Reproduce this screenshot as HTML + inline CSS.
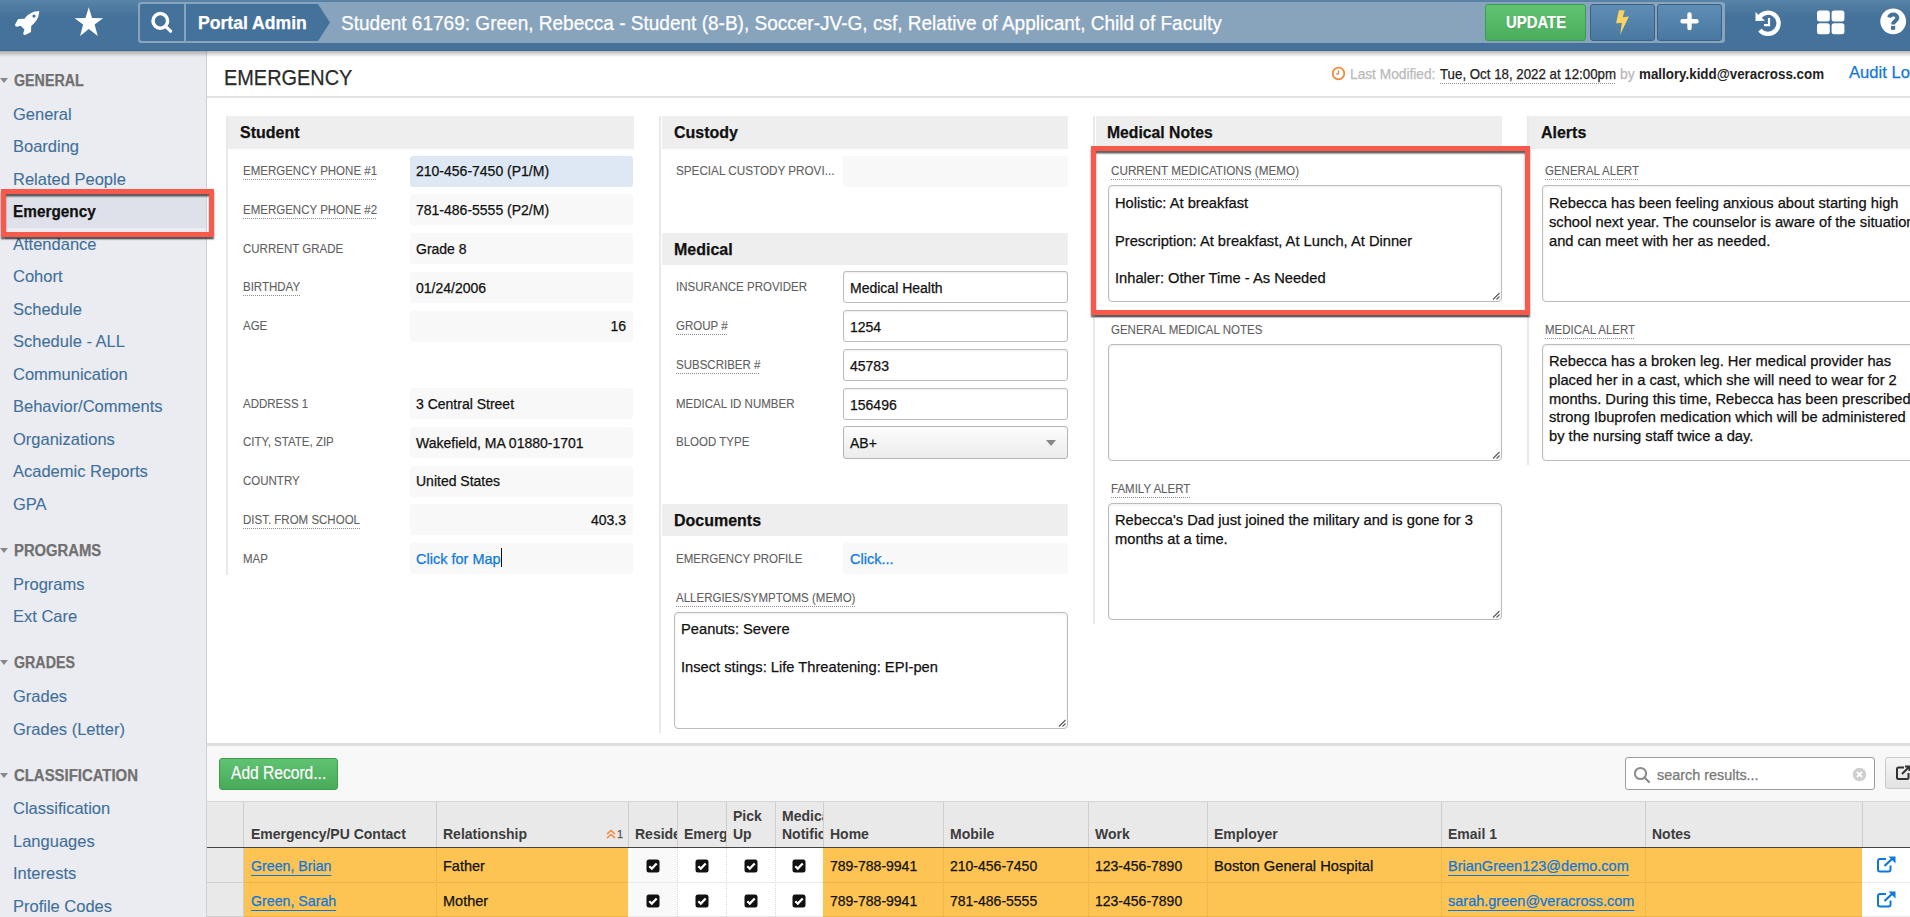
<!DOCTYPE html>
<html><head><meta charset="utf-8">
<style>
*{box-sizing:border-box;margin:0;padding:0}
html,body{width:1910px;height:917px;overflow:hidden;background:#fff;font-family:"Liberation Sans",sans-serif;color:#111}
.a{position:absolute}
.t{position:absolute;white-space:nowrap;line-height:1;-webkit-text-stroke:0.25px currentColor}
.u{border-bottom:1px dotted #9a9a9a;padding-bottom:0}
</style></head><body>
<div class="a" style="left:0;top:0;width:1910px;height:51px;background:linear-gradient(#5a83a8 0px,#4c789f 10px,#45729a 18px,#45719a 49px,#3d6a92 51px)"></div>
<div class="a" style="left:0;top:51px;width:1910px;height:6px;background:linear-gradient(rgba(0,0,0,.28),rgba(0,0,0,0));z-index:5"></div>
<svg class="a" style="left:0;top:0" width="110" height="42" viewBox="0 0 110 42">
<path fill="#fff" d="M39.2 10.9 C33 11 28 14 24.5 18.7 L18.2 19.1 L15 24.6 Q14.8 26.8 16.9 26.8 L20.7 25.8 L24.5 29.4 L23.2 33.2 Q23.4 35.3 25.2 35.1 L31 31.9 L31.2 26 C35.2 22.5 39 18.5 39.2 10.9 Z"/>
<circle cx="34" cy="16.1" r="1.6" fill="#45729a"/>
<path fill="#fff" d="M88.76 7.2 L92.1 17.9 L103.1 18.3 L94.6 24.4 L97.8 35.9 L88.76 29 L80.1 35.9 L83.1 24.4 L74.6 18.3 L85.5 17.9 Z"/>
</svg>
<div class="a" style="left:138px;top:2px;width:1587px;height:41px;background:#88a3bc;border-radius:3px"></div>
<div class="a" style="left:140px;top:4px;width:44px;height:37px;background:#45729a;border-radius:2px 0 0 2px"></div>
<svg class="a" style="left:149px;top:9px" width="26" height="27" viewBox="0 0 26 27">
<circle cx="11.3" cy="11.9" r="7.3" fill="none" stroke="#fff" stroke-width="3.5"/>
<line x1="16.8" y1="17.6" x2="21.6" y2="22.2" stroke="#fff" stroke-width="3.2" stroke-linecap="round"/></svg>
<svg class="a" style="left:186px;top:4px" width="145" height="37" viewBox="0 0 145 37"><path d="M0 0 H132 L144 18.5 L132 37 H0 Z" fill="#45729a"/></svg>
<div class="t" style="left:198px;top:15.04px;font-size:17.6px;color:#fff;font-weight:bold;">Portal Admin</div>
<div class="t" style="left:341px;top:13.07px;font-size:20.5px;color:#fff;transform:scaleX(0.928);transform-origin:0 0;">Student 61769: Green, Rebecca - Student (8-B), Soccer-JV-G, csf, Relative of Applicant, Child of Faculty</div>
<div class="a" style="left:1485px;top:4px;width:101px;height:37px;border-radius:3px;border:1px solid #3c9b4d;background:linear-gradient(#60c474,#4aad5c)"></div>
<div class="t" style="left:1506px;top:13.55px;font-size:17px;color:#fff;font-weight:bold;transform:scaleX(0.875);transform-origin:0 0;text-shadow:0 1px 1px rgba(0,0,0,.25)">UPDATE</div>
<div class="a" style="left:1590px;top:4px;width:65px;height:37px;border-radius:3px;border:1px solid #3b6185;background:linear-gradient(#5e8db6,#4978a1)"></div>
<svg class="a" style="left:1605px;top:5px" width="30" height="32" viewBox="0 0 30 32"><path d="M13.9 5.2 L19.8 5.3 L17.7 12.2 L23.9 11.6 L15.1 29.8 L16.8 17.9 L11.1 18.3 Z" fill="#fad45e"/></svg>
<div class="a" style="left:1657px;top:4px;width:65px;height:37px;border-radius:3px;border:1px solid #3b6185;background:linear-gradient(#5e8db6,#4978a1)"></div>
<svg class="a" style="left:1680px;top:12px" width="19" height="19" viewBox="0 0 19 19"><path d="M9.5 2.5 V16 M2.5 9.3 H16.5" stroke="#fff" stroke-width="4.4" stroke-linecap="round"/></svg>
<svg class="a" style="left:1750px;top:5px" width="40" height="35" viewBox="0 0 40 35">
<path d="M8.4 13.8 A10.6 10.6 0 1 1 9.9 25.1" fill="none" stroke="#fff" stroke-width="4.4"/>
<path d="M5.5 6.9 L5.5 16 L15 15.7 Z" fill="#fff"/>
<path d="M19 13 V20.2 H14" fill="none" stroke="#fff" stroke-width="2.2"/></svg>
<svg class="a" style="left:1816px;top:10px" width="30" height="25" viewBox="0 0 30 25">
<rect x="1" y="0.5" width="12.8" height="11" rx="2.5" fill="#fff"/><rect x="15.6" y="0.5" width="12.8" height="11" rx="2.5" fill="#fff"/>
<rect x="1" y="13.3" width="12.8" height="11" rx="2.5" fill="#fff"/><rect x="15.6" y="13.3" width="12.8" height="11" rx="2.5" fill="#fff"/></svg>
<svg class="a" style="left:1875px;top:5px" width="35" height="35" viewBox="0 0 35 35">
<circle cx="18.2" cy="16.3" r="12.9" fill="#fff"/>
<path d="M14.2 12.6 C14.8 10.2 16.4 9.6 18.3 9.6 C20.6 9.6 22.3 10.9 22.3 13 C22.3 15.8 18.1 16.1 18.1 19.4" fill="none" stroke="#45729a" stroke-width="4"/>
<rect x="16" y="20.9" width="4.2" height="3.9" fill="#45729a"/></svg>
<div class="a" style="left:0px;top:51px;width:207px;height:866px;background:#ebecf1;border-right:1px solid #d0d0d2"></div>
<div class="t" style="left:14px;top:72.74px;font-size:15.6px;color:#707070;font-weight:bold;transform:scaleX(0.915);transform-origin:0 0;">GENERAL</div>
<div class="a" style="left:0;top:78px;width:0;height:0;border-left:4px solid transparent;border-right:4px solid transparent;border-top:5px solid #888"></div>
<div class="t" style="left:13px;top:105.97px;font-size:16.5px;color:#41709a;-webkit-text-stroke:0.1px currentColor">General</div>
<div class="t" style="left:13px;top:138.47px;font-size:16.5px;color:#41709a;-webkit-text-stroke:0.1px currentColor">Boarding</div>
<div class="t" style="left:13px;top:170.97px;font-size:16.5px;color:#41709a;-webkit-text-stroke:0.1px currentColor">Related People</div>
<div class="a" style="left:0px;top:195px;width:206px;height:33px;background:#dfe1ea"></div>
<div class="t" style="left:13px;top:203.47px;font-size:16.5px;color:#111;font-weight:bold;transform:scaleX(0.93);transform-origin:0 0;">Emergency</div>
<div class="t" style="left:13px;top:235.97px;font-size:16.5px;color:#41709a;-webkit-text-stroke:0.1px currentColor">Attendance</div>
<div class="t" style="left:13px;top:268.48px;font-size:16.5px;color:#41709a;-webkit-text-stroke:0.1px currentColor">Cohort</div>
<div class="t" style="left:13px;top:300.98px;font-size:16.5px;color:#41709a;-webkit-text-stroke:0.1px currentColor">Schedule</div>
<div class="t" style="left:13px;top:333.48px;font-size:16.5px;color:#41709a;-webkit-text-stroke:0.1px currentColor">Schedule - ALL</div>
<div class="t" style="left:13px;top:365.98px;font-size:16.5px;color:#41709a;-webkit-text-stroke:0.1px currentColor">Communication</div>
<div class="t" style="left:13px;top:398.48px;font-size:16.5px;color:#41709a;-webkit-text-stroke:0.1px currentColor">Behavior/Comments</div>
<div class="t" style="left:13px;top:430.98px;font-size:16.5px;color:#41709a;-webkit-text-stroke:0.1px currentColor">Organizations</div>
<div class="t" style="left:13px;top:463.48px;font-size:16.5px;color:#41709a;-webkit-text-stroke:0.1px currentColor">Academic Reports</div>
<div class="t" style="left:13px;top:495.98px;font-size:16.5px;color:#41709a;-webkit-text-stroke:0.1px currentColor">GPA</div>
<div class="t" style="left:14px;top:542.74px;font-size:15.6px;color:#707070;font-weight:bold;transform:scaleX(0.95);transform-origin:0 0;">PROGRAMS</div>
<div class="a" style="left:0;top:548px;width:0;height:0;border-left:4px solid transparent;border-right:4px solid transparent;border-top:5px solid #888"></div>
<div class="t" style="left:13px;top:575.98px;font-size:16.5px;color:#41709a;-webkit-text-stroke:0.1px currentColor">Programs</div>
<div class="t" style="left:13px;top:608.48px;font-size:16.5px;color:#41709a;-webkit-text-stroke:0.1px currentColor">Ext Care</div>
<div class="t" style="left:14px;top:654.74px;font-size:15.6px;color:#707070;font-weight:bold;transform:scaleX(0.913);transform-origin:0 0;">GRADES</div>
<div class="a" style="left:0;top:660px;width:0;height:0;border-left:4px solid transparent;border-right:4px solid transparent;border-top:5px solid #888"></div>
<div class="t" style="left:13px;top:687.98px;font-size:16.5px;color:#41709a;-webkit-text-stroke:0.1px currentColor">Grades</div>
<div class="t" style="left:13px;top:720.98px;font-size:16.5px;color:#41709a;-webkit-text-stroke:0.1px currentColor">Grades (Letter)</div>
<div class="t" style="left:14px;top:767.74px;font-size:15.6px;color:#707070;font-weight:bold;transform:scaleX(0.956);transform-origin:0 0;">CLASSIFICATION</div>
<div class="a" style="left:0;top:773px;width:0;height:0;border-left:4px solid transparent;border-right:4px solid transparent;border-top:5px solid #888"></div>
<div class="t" style="left:13px;top:800.48px;font-size:16.5px;color:#41709a;-webkit-text-stroke:0.1px currentColor">Classification</div>
<div class="t" style="left:13px;top:832.98px;font-size:16.5px;color:#41709a;-webkit-text-stroke:0.1px currentColor">Languages</div>
<div class="t" style="left:13px;top:865.48px;font-size:16.5px;color:#41709a;-webkit-text-stroke:0.1px currentColor">Interests</div>
<div class="t" style="left:13px;top:897.98px;font-size:16.5px;color:#41709a;-webkit-text-stroke:0.1px currentColor">Profile Codes</div>
<div class="a" style="left:1px;top:189px;width:213px;height:48px;border:5px solid #f9594a;box-shadow:0 2.5px 1.5px rgba(30,30,30,.72),inset 0 2.5px 1.5px rgba(30,30,30,.72);z-index:6"></div>
<div class="t" style="left:223.5px;top:66.88px;font-size:22.5px;color:#2a2a2a;transform:scaleX(0.885);transform-origin:0 0;">EMERGENCY</div>
<div class="a" style="left:206px;top:96px;width:1704px;height:2px;background:#e2e2e2"></div>
<svg class="a" style="left:1331px;top:66px" width="15" height="15" viewBox="0 0 15 15"><circle cx="7.5" cy="7.5" r="5.8" fill="none" stroke="#f5883a" stroke-width="1.8"/><path d="M7.5 4.2 V7.8 H5" fill="none" stroke="#f5883a" stroke-width="1.3"/></svg>
<div class="t" style="left:1350px;top:67.10px;font-size:14px;color:#b9b9b9;transform:scaleX(0.98);transform-origin:0 0;">Last Modified:</div>
<div class="t" style="left:1440px;top:67.10px;font-size:14px;color:#222;transform:scaleX(0.949);transform-origin:0 0;">Tue, Oct 18, 2022 at 12:00pm</div>
<div class="a" style="left:1440px;top:83px;width:176px;height:1px;background:repeating-linear-gradient(90deg,#8c8c8c 0 1px,transparent 1px 2px)"></div>
<div class="t" style="left:1620px;top:67.10px;font-size:14px;color:#b9b9b9;">by</div>
<div class="t" style="left:1639px;top:67.10px;font-size:14px;color:#222;font-weight:bold;transform:scaleX(0.954);transform-origin:0 0;-webkit-text-stroke:0">mallory.kidd@veracross.com</div>
<div class="t" style="left:1849px;top:64.89px;font-size:16.6px;color:#0f78dc;">Audit Log</div>
<div class="a" style="left:226px;top:116px;width:2px;height:459px;background:#e9e9e9"></div>
<div class="a" style="left:228px;top:116px;width:406px;height:33px;background:#eeeeee;border-radius:2px 0 0 0"></div>
<div class="t" style="left:240px;top:123.55px;font-size:17px;color:#111;font-weight:bold;transform:scaleX(0.94);transform-origin:0 0;">Student</div>
<div class="t" style="left:243px;top:164px;font-size:13px;color:#606060;transform:scaleX(0.885);transform-origin:0 0;-webkit-text-stroke:0.1px currentColor;">EMERGENCY PHONE #1</div>
<div class="a" style="left:243px;top:179px;width:134px;height:1px;background:repeating-linear-gradient(90deg,#8c8c8c 0 1px,transparent 1px 2px)"></div>
<div class="a" style="left:410px;top:156px;width:223px;height:31px;background:#dde8f4;border-radius:3px"></div>
<div class="t" style="left:416px;top:164.10px;font-size:14px;color:#111;">210-456-7450 (P1/M)</div>
<div class="t" style="left:243px;top:203px;font-size:13px;color:#606060;transform:scaleX(0.885);transform-origin:0 0;-webkit-text-stroke:0.1px currentColor;">EMERGENCY PHONE #2</div>
<div class="a" style="left:243px;top:218px;width:134px;height:1px;background:repeating-linear-gradient(90deg,#8c8c8c 0 1px,transparent 1px 2px)"></div>
<div class="a" style="left:410px;top:194px;width:223px;height:31px;background:#f8f8f8;border-radius:3px"></div>
<div class="t" style="left:416px;top:203.10px;font-size:14px;color:#111;">781-486-5555 (P2/M)</div>
<div class="t" style="left:243px;top:242px;font-size:13px;color:#606060;transform:scaleX(0.885);transform-origin:0 0;-webkit-text-stroke:0.1px currentColor;">CURRENT GRADE</div>
<div class="a" style="left:410px;top:233px;width:223px;height:31px;background:#f8f8f8;border-radius:3px"></div>
<div class="t" style="left:416px;top:242.10px;font-size:14px;color:#111;">Grade 8</div>
<div class="t" style="left:243px;top:280px;font-size:13px;color:#606060;transform:scaleX(0.885);transform-origin:0 0;-webkit-text-stroke:0.1px currentColor;">BIRTHDAY</div>
<div class="a" style="left:243px;top:295px;width:57px;height:1px;background:repeating-linear-gradient(90deg,#8c8c8c 0 1px,transparent 1px 2px)"></div>
<div class="a" style="left:410px;top:272px;width:223px;height:31px;background:#f8f8f8;border-radius:3px"></div>
<div class="t" style="left:416px;top:281.10px;font-size:14px;color:#111;">01/24/2006</div>
<div class="t" style="left:243px;top:319px;font-size:13px;color:#606060;transform:scaleX(0.885);transform-origin:0 0;-webkit-text-stroke:0.1px currentColor;">AGE</div>
<div class="a" style="left:410px;top:311px;width:223px;height:31px;background:#f8f8f8;border-radius:3px"></div>
<div class="t" style="right:1284px;top:319.10px;font-size:14px;color:#111">16</div>
<div class="t" style="left:243px;top:397px;font-size:13px;color:#606060;transform:scaleX(0.885);transform-origin:0 0;-webkit-text-stroke:0.1px currentColor;">ADDRESS 1</div>
<div class="a" style="left:410px;top:388px;width:223px;height:31px;background:#f8f8f8;border-radius:3px"></div>
<div class="t" style="left:416px;top:397.10px;font-size:14px;color:#111;">3 Central Street</div>
<div class="t" style="left:243px;top:435px;font-size:13px;color:#606060;transform:scaleX(0.885);transform-origin:0 0;-webkit-text-stroke:0.1px currentColor;">CITY, STATE, ZIP</div>
<div class="a" style="left:410px;top:427px;width:223px;height:31px;background:#f8f8f8;border-radius:3px"></div>
<div class="t" style="left:416px;top:436.10px;font-size:14px;color:#111;">Wakefield, MA 01880-1701</div>
<div class="t" style="left:243px;top:474px;font-size:13px;color:#606060;transform:scaleX(0.885);transform-origin:0 0;-webkit-text-stroke:0.1px currentColor;">COUNTRY</div>
<div class="a" style="left:410px;top:466px;width:223px;height:31px;background:#f8f8f8;border-radius:3px"></div>
<div class="t" style="left:416px;top:474.10px;font-size:14px;color:#111;">United States</div>
<div class="t" style="left:243px;top:513px;font-size:13px;color:#606060;transform:scaleX(0.885);transform-origin:0 0;-webkit-text-stroke:0.1px currentColor;">DIST. FROM SCHOOL</div>
<div class="a" style="left:243px;top:528px;width:117px;height:1px;background:repeating-linear-gradient(90deg,#8c8c8c 0 1px,transparent 1px 2px)"></div>
<div class="a" style="left:410px;top:504px;width:223px;height:31px;background:#f8f8f8;border-radius:3px"></div>
<div class="t" style="right:1284px;top:513.10px;font-size:14px;color:#111">403.3</div>
<div class="t" style="left:243px;top:552px;font-size:13px;color:#606060;transform:scaleX(0.885);transform-origin:0 0;-webkit-text-stroke:0.1px currentColor;">MAP</div>
<div class="a" style="left:410px;top:543px;width:223px;height:31px;background:#f8f8f8;border-radius:3px"></div>
<div class="t" style="left:416px;top:551.67px;font-size:14.5px;color:#0f78dc;">Click for Map</div>
<div class="a" style="left:501px;top:548px;width:1px;height:19px;background:#111"></div>
<div class="a" style="left:659px;top:116px;width:2px;height:617px;background:#e9e9e9"></div>
<div class="a" style="left:662px;top:116px;width:406px;height:33px;background:#eeeeee;border-radius:2px 0 0 0"></div>
<div class="t" style="left:674px;top:123.55px;font-size:17px;color:#111;font-weight:bold;transform:scaleX(0.94);transform-origin:0 0;">Custody</div>
<div class="t" style="left:676px;top:164px;font-size:13px;color:#606060;transform:scaleX(0.9);transform-origin:0 0;-webkit-text-stroke:0.1px currentColor;">SPECIAL CUSTODY PROVI...</div>
<div class="a" style="left:843px;top:156px;width:225px;height:31px;background:#f8f8f8;border-radius:3px"></div>
<div class="a" style="left:662px;top:233px;width:406px;height:32px;background:#eeeeee;border-radius:2px 0 0 0"></div>
<div class="t" style="left:674px;top:240.55px;font-size:17px;color:#111;font-weight:bold;transform:scaleX(0.94);transform-origin:0 0;">Medical</div>
<div class="t" style="left:676px;top:280px;font-size:13px;color:#606060;transform:scaleX(0.885);transform-origin:0 0;-webkit-text-stroke:0.1px currentColor;">INSURANCE PROVIDER</div>
<div class="a" style="left:843px;top:271px;width:225px;height:32px;background:#fff;border:1px solid #bcbcbc;border-radius:3px;box-shadow:inset 0 1px 2px rgba(0,0,0,.07)"></div>
<div class="t" style="left:850px;top:281.10px;font-size:14px;color:#111;">Medical Health</div>
<div class="t" style="left:676px;top:319px;font-size:13px;color:#606060;transform:scaleX(0.885);transform-origin:0 0;-webkit-text-stroke:0.1px currentColor;">GROUP #</div>
<div class="a" style="left:676px;top:334px;width:52px;height:1px;background:repeating-linear-gradient(90deg,#8c8c8c 0 1px,transparent 1px 2px)"></div>
<div class="a" style="left:843px;top:310px;width:225px;height:32px;background:#fff;border:1px solid #bcbcbc;border-radius:3px;box-shadow:inset 0 1px 2px rgba(0,0,0,.07)"></div>
<div class="t" style="left:850px;top:320.10px;font-size:14px;color:#111;">1254</div>
<div class="t" style="left:676px;top:358px;font-size:13px;color:#606060;transform:scaleX(0.885);transform-origin:0 0;-webkit-text-stroke:0.1px currentColor;">SUBSCRIBER #</div>
<div class="a" style="left:676px;top:373px;width:84px;height:1px;background:repeating-linear-gradient(90deg,#8c8c8c 0 1px,transparent 1px 2px)"></div>
<div class="a" style="left:843px;top:349px;width:225px;height:32px;background:#fff;border:1px solid #bcbcbc;border-radius:3px;box-shadow:inset 0 1px 2px rgba(0,0,0,.07)"></div>
<div class="t" style="left:850px;top:359.10px;font-size:14px;color:#111;">45783</div>
<div class="t" style="left:676px;top:397px;font-size:13px;color:#606060;transform:scaleX(0.885);transform-origin:0 0;-webkit-text-stroke:0.1px currentColor;">MEDICAL ID NUMBER</div>
<div class="a" style="left:843px;top:388px;width:225px;height:32px;background:#fff;border:1px solid #bcbcbc;border-radius:3px;box-shadow:inset 0 1px 2px rgba(0,0,0,.07)"></div>
<div class="t" style="left:850px;top:398.10px;font-size:14px;color:#111;">156496</div>
<div class="t" style="left:676px;top:435px;font-size:13px;color:#606060;transform:scaleX(0.885);transform-origin:0 0;-webkit-text-stroke:0.1px currentColor;">BLOOD TYPE</div>
<div class="a" style="left:843px;top:426px;width:225px;height:33px;background:linear-gradient(#fcfcfc,#ececec);border:1px solid #b4b4b4;border-radius:3px"></div>
<div class="t" style="left:850px;top:436.10px;font-size:14px;color:#111;">AB+</div>
<div class="a" style="left:1046px;top:440px;width:0;height:0;border-left:5px solid transparent;border-right:5px solid transparent;border-top:6px solid #888"></div>
<div class="a" style="left:662px;top:504px;width:406px;height:32px;background:#eeeeee;border-radius:2px 0 0 0"></div>
<div class="t" style="left:674px;top:511.55px;font-size:17px;color:#111;font-weight:bold;transform:scaleX(0.94);transform-origin:0 0;">Documents</div>
<div class="t" style="left:676px;top:552px;font-size:13px;color:#606060;transform:scaleX(0.885);transform-origin:0 0;-webkit-text-stroke:0.1px currentColor;">EMERGENCY PROFILE</div>
<div class="a" style="left:843px;top:543px;width:225px;height:31px;background:#f8f8f8;border-radius:3px"></div>
<div class="t" style="left:850px;top:551.67px;font-size:14.5px;color:#0f78dc;">Click...</div>
<div class="t" style="left:676px;top:591px;font-size:13px;color:#606060;transform:scaleX(0.885);transform-origin:0 0;-webkit-text-stroke:0.1px currentColor;">ALLERGIES/SYMPTOMS (MEMO)</div>
<div class="a" style="left:676px;top:606px;width:179px;height:1px;background:repeating-linear-gradient(90deg,#8c8c8c 0 1px,transparent 1px 2px)"></div>
<div class="a" style="left:674px;top:612px;width:394px;height:117px;background:#fff;border:1px solid #bcbcbc;border-radius:4px;box-shadow:inset 0 1px 3px rgba(0,0,0,.08)"></div>
<div class="t" style="left:681px;top:621.50px;font-size:14.7px;color:#111;">Peanuts: Severe</div>
<div class="t" style="left:681px;top:659.50px;font-size:14.7px;color:#111;">Insect stings: Life Threatening: EPI-pen</div>
<svg class="a" style="left:1058px;top:719px" width="8" height="8" viewBox="0 0 8 8"><path d="M7.5 1 L1 7.5 M7.5 4.5 L4.5 7.5" stroke="#5a5a5a" stroke-width="1.1"/></svg>
<div class="a" style="left:1093px;top:116px;width:2px;height:508px;background:#e9e9e9"></div>
<div class="a" style="left:1096px;top:116px;width:406px;height:33px;background:#eeeeee;border-radius:2px 0 0 0"></div>
<div class="t" style="left:1107px;top:123.55px;font-size:17px;color:#111;font-weight:bold;transform:scaleX(0.925);transform-origin:0 0;">Medical Notes</div>
<div class="t" style="left:1111px;top:164px;font-size:13px;color:#606060;transform:scaleX(0.9);transform-origin:0 0;-webkit-text-stroke:0.1px currentColor;">CURRENT MEDICATIONS (MEMO)</div>
<div class="a" style="left:1111px;top:179px;width:188px;height:1px;background:repeating-linear-gradient(90deg,#8c8c8c 0 1px,transparent 1px 2px)"></div>
<div class="a" style="left:1108px;top:185px;width:394px;height:117px;background:#fff;border:1px solid #bcbcbc;border-radius:4px;box-shadow:inset 0 1px 3px rgba(0,0,0,.08)"></div>
<div class="t" style="left:1115px;top:195.50px;font-size:14.7px;color:#111;">Holistic: At breakfast</div>
<div class="t" style="left:1115px;top:233.50px;font-size:14.7px;color:#111;">Prescription: At breakfast, At Lunch, At Dinner</div>
<div class="t" style="left:1115px;top:270.50px;font-size:14.7px;color:#111;">Inhaler: Other Time - As Needed</div>
<svg class="a" style="left:1492px;top:292px" width="8" height="8" viewBox="0 0 8 8"><path d="M7.5 1 L1 7.5 M7.5 4.5 L4.5 7.5" stroke="#5a5a5a" stroke-width="1.1"/></svg>
<div class="t" style="left:1111px;top:323px;font-size:13px;color:#606060;transform:scaleX(0.885);transform-origin:0 0;-webkit-text-stroke:0.1px currentColor;">GENERAL MEDICAL NOTES</div>
<div class="a" style="left:1108px;top:344px;width:394px;height:117px;background:#fff;border:1px solid #bcbcbc;border-radius:4px;box-shadow:inset 0 1px 3px rgba(0,0,0,.08)"></div>
<svg class="a" style="left:1492px;top:451px" width="8" height="8" viewBox="0 0 8 8"><path d="M7.5 1 L1 7.5 M7.5 4.5 L4.5 7.5" stroke="#5a5a5a" stroke-width="1.1"/></svg>
<div class="t" style="left:1111px;top:482px;font-size:13px;color:#606060;transform:scaleX(0.885);transform-origin:0 0;-webkit-text-stroke:0.1px currentColor;">FAMILY ALERT</div>
<div class="a" style="left:1111px;top:497px;width:79px;height:1px;background:repeating-linear-gradient(90deg,#8c8c8c 0 1px,transparent 1px 2px)"></div>
<div class="a" style="left:1108px;top:503px;width:394px;height:117px;background:#fff;border:1px solid #bcbcbc;border-radius:4px;box-shadow:inset 0 1px 3px rgba(0,0,0,.08)"></div>
<div class="t" style="left:1115px;top:512.50px;font-size:14.7px;color:#111;">Rebecca&#x27;s Dad just joined the military and is gone for 3</div>
<div class="t" style="left:1115px;top:531.50px;font-size:14.7px;color:#111;">months at a time.</div>
<svg class="a" style="left:1492px;top:610px" width="8" height="8" viewBox="0 0 8 8"><path d="M7.5 1 L1 7.5 M7.5 4.5 L4.5 7.5" stroke="#5a5a5a" stroke-width="1.1"/></svg>
<div class="a" style="left:1091px;top:146px;width:439px;height:169px;border:5px solid #f9594a;box-shadow:0 2.5px 1.5px rgba(30,30,30,.72),inset 0 2.5px 1.5px rgba(30,30,30,.72);z-index:6"></div>
<div class="a" style="left:1527px;top:116px;width:2px;height:349px;background:#e9e9e9"></div>
<div class="a" style="left:1529px;top:116px;width:399px;height:33px;background:#eeeeee;border-radius:2px 0 0 0"></div>
<div class="t" style="left:1541px;top:123.55px;font-size:17px;color:#111;font-weight:bold;transform:scaleX(0.94);transform-origin:0 0;">Alerts</div>
<div class="t" style="left:1545px;top:164px;font-size:13px;color:#606060;transform:scaleX(0.885);transform-origin:0 0;-webkit-text-stroke:0.1px currentColor;">GENERAL ALERT</div>
<div class="a" style="left:1545px;top:179px;width:94px;height:1px;background:repeating-linear-gradient(90deg,#8c8c8c 0 1px,transparent 1px 2px)"></div>
<div class="a" style="left:1542px;top:185px;width:400px;height:117px;background:#fff;border:1px solid #bcbcbc;border-radius:4px;box-shadow:inset 0 1px 3px rgba(0,0,0,.08)"></div>
<div class="t" style="left:1549px;top:195.50px;font-size:14.7px;color:#111;">Rebecca has been feeling anxious about starting high</div>
<div class="t" style="left:1549px;top:214.50px;font-size:14.7px;color:#111;">school next year. The counselor is aware of the situation</div>
<div class="t" style="left:1549px;top:233.50px;font-size:14.7px;color:#111;">and can meet with her as needed.</div>
<svg class="a" style="left:1932px;top:292px" width="8" height="8" viewBox="0 0 8 8"><path d="M7.5 1 L1 7.5 M7.5 4.5 L4.5 7.5" stroke="#5a5a5a" stroke-width="1.1"/></svg>
<div class="t" style="left:1545px;top:323px;font-size:13px;color:#606060;transform:scaleX(0.885);transform-origin:0 0;-webkit-text-stroke:0.1px currentColor;">MEDICAL ALERT</div>
<div class="a" style="left:1545px;top:338px;width:90px;height:1px;background:repeating-linear-gradient(90deg,#8c8c8c 0 1px,transparent 1px 2px)"></div>
<div class="a" style="left:1542px;top:344px;width:400px;height:117px;background:#fff;border:1px solid #bcbcbc;border-radius:4px;box-shadow:inset 0 1px 3px rgba(0,0,0,.08)"></div>
<div class="t" style="left:1549px;top:353.50px;font-size:14.7px;color:#111;">Rebecca has a broken leg. Her medical provider has</div>
<div class="t" style="left:1549px;top:372.50px;font-size:14.7px;color:#111;">placed her in a cast, which she will need to wear for 2</div>
<div class="t" style="left:1549px;top:391.50px;font-size:14.7px;color:#111;">months. During this time, Rebecca has been prescribed</div>
<div class="t" style="left:1549px;top:409.50px;font-size:14.7px;color:#111;">strong Ibuprofen medication which will be administered</div>
<div class="t" style="left:1549px;top:428.50px;font-size:14.7px;color:#111;">by the nursing staff twice a day.</div>
<svg class="a" style="left:1932px;top:451px" width="8" height="8" viewBox="0 0 8 8"><path d="M7.5 1 L1 7.5 M7.5 4.5 L4.5 7.5" stroke="#5a5a5a" stroke-width="1.1"/></svg>
<div class="a" style="left:206px;top:743px;width:1704px;height:3px;background:#dedede"></div>
<div class="a" style="left:206px;top:746px;width:1704px;height:56px;background:#f8f8f8;border-bottom:1px solid #d6d6d6"></div>
<div class="a" style="left:219px;top:758px;width:119px;height:32px;background:linear-gradient(#5fc373,#47ab59);border:1px solid #3d9c4e;border-radius:3px"></div>
<div class="t" style="left:230.5px;top:765.04px;font-size:17.6px;color:#fff;transform:scaleX(0.885);transform-origin:0 0;text-shadow:0 1px 1px rgba(0,0,0,.2)">Add Record...</div>
<div class="a" style="left:1625px;top:757px;width:250px;height:33px;background:#fff;border:1px solid #9c9c9c;border-radius:3px"></div>
<svg class="a" style="left:1633px;top:766px" width="19" height="19" viewBox="0 0 19 19"><circle cx="7.5" cy="7.5" r="5.6" fill="none" stroke="#8c8c8c" stroke-width="2"/><line x1="11.5" y1="11.5" x2="16" y2="16" stroke="#8c8c8c" stroke-width="2.2" stroke-linecap="round"/></svg>
<div class="t" style="left:1657px;top:767.76px;font-size:14.4px;color:#777;">search results...</div>
<svg class="a" style="left:1852px;top:767px" width="15" height="15" viewBox="0 0 15 15"><circle cx="7.5" cy="7.5" r="6.8" fill="#cfcfcf"/><path d="M5 5 L10 10 M10 5 L5 10" stroke="#fff" stroke-width="1.8"/></svg>
<div class="a" style="left:1885px;top:757px;width:40px;height:32px;background:linear-gradient(#f6f6f6,#e2e2e2);border:1px solid #c8c8c8;border-radius:3px"></div>
<svg class="a" style="left:1895px;top:765px" width="16" height="16" viewBox="0 0 16 16"><path d="M9 2.5 H3.5 Q2 2.5 2 4 V12.5 Q2 14 3.5 14 H12 Q13.5 14 13.5 12.5 V8" fill="none" stroke="#333" stroke-width="2"/><path d="M7 9 L14 2 M10 1.5 H14.5 V6" fill="none" stroke="#333" stroke-width="2"/></svg>
<div class="a" style="left:206px;top:802px;width:1704px;height:46px;background:#e9e9e9"></div>
<div class="a" style="left:206px;top:847px;width:1704px;height:1px;background:#444"></div>
<div class="a" style="left:243px;top:802px;width:1px;height:45px;background:#cdcdcd"></div>
<div class="a" style="left:436px;top:802px;width:1px;height:45px;background:#cdcdcd"></div>
<div class="a" style="left:628px;top:802px;width:1px;height:45px;background:#cdcdcd"></div>
<div class="a" style="left:677px;top:802px;width:1px;height:45px;background:#cdcdcd"></div>
<div class="a" style="left:726px;top:802px;width:1px;height:45px;background:#cdcdcd"></div>
<div class="a" style="left:775px;top:802px;width:1px;height:45px;background:#cdcdcd"></div>
<div class="a" style="left:823px;top:802px;width:1px;height:45px;background:#cdcdcd"></div>
<div class="a" style="left:943px;top:802px;width:1px;height:45px;background:#cdcdcd"></div>
<div class="a" style="left:1088px;top:802px;width:1px;height:45px;background:#cdcdcd"></div>
<div class="a" style="left:1207px;top:802px;width:1px;height:45px;background:#cdcdcd"></div>
<div class="a" style="left:1441px;top:802px;width:1px;height:45px;background:#cdcdcd"></div>
<div class="a" style="left:1645px;top:802px;width:1px;height:45px;background:#cdcdcd"></div>
<div class="a" style="left:1862px;top:802px;width:1px;height:45px;background:#cdcdcd"></div>
<div class="t" style="left:251px;top:827.10px;font-size:14px;color:#3c3c3c;font-weight:bold;-webkit-text-stroke:0">Emergency/PU Contact</div>
<div class="t" style="left:443px;top:827.10px;font-size:14px;color:#3c3c3c;font-weight:bold;-webkit-text-stroke:0">Relationship</div>
<svg class="a" style="left:606px;top:829px" width="10" height="10" viewBox="0 0 10 10"><path d="M1 5 L5 1.5 L9 5 M1 9 L5 5.5 L9 9" fill="none" stroke="#f5883a" stroke-width="1.6"/></svg>
<div class="t" style="left:617px;top:828.65px;font-size:11px;color:#555;">1</div>
<div class="a" style="left:635px;top:805px;width:42px;height:40px;overflow:hidden"><div class="t" style="left:0;top:22.10px;font-size:14px;font-weight:bold;color:#3c3c3c;-webkit-text-stroke:0">Residence</div></div>
<div class="a" style="left:684px;top:805px;width:42px;height:40px;overflow:hidden"><div class="t" style="left:0;top:22.10px;font-size:14px;font-weight:bold;color:#3c3c3c;-webkit-text-stroke:0">Emergency</div></div>
<div class="t" style="left:733px;top:808.60px;font-size:14px;color:#3c3c3c;font-weight:bold;-webkit-text-stroke:0">Pick</div>
<div class="t" style="left:733px;top:827.10px;font-size:14px;color:#3c3c3c;font-weight:bold;-webkit-text-stroke:0">Up</div>
<div class="a" style="left:782px;top:805px;width:41px;height:40px;overflow:hidden"><div class="t" style="left:0;top:3.60px;font-size:14px;font-weight:bold;color:#3c3c3c;-webkit-text-stroke:0">Medical</div></div>
<div class="a" style="left:782px;top:805px;width:41px;height:40px;overflow:hidden"><div class="t" style="left:0;top:22.10px;font-size:14px;font-weight:bold;color:#3c3c3c;-webkit-text-stroke:0">Notification</div></div>
<div class="t" style="left:830px;top:827.10px;font-size:14px;color:#3c3c3c;font-weight:bold;-webkit-text-stroke:0">Home</div>
<div class="t" style="left:950px;top:827.10px;font-size:14px;color:#3c3c3c;font-weight:bold;-webkit-text-stroke:0">Mobile</div>
<div class="t" style="left:1095px;top:827.10px;font-size:14px;color:#3c3c3c;font-weight:bold;-webkit-text-stroke:0">Work</div>
<div class="t" style="left:1214px;top:827.10px;font-size:14px;color:#3c3c3c;font-weight:bold;-webkit-text-stroke:0">Employer</div>
<div class="t" style="left:1448px;top:827.10px;font-size:14px;color:#3c3c3c;font-weight:bold;-webkit-text-stroke:0">Email 1</div>
<div class="t" style="left:1652px;top:827.10px;font-size:14px;color:#3c3c3c;font-weight:bold;-webkit-text-stroke:0">Notes</div>
<div class="a" style="left:206px;top:848px;width:38px;height:35px;background:#e9e9e9;border-bottom:1px solid #d0d0d0"></div>
<div class="a" style="left:244px;top:848px;width:384px;height:35px;background:#fec453;border-bottom:1px solid #eeb447"></div>
<div class="a" style="left:628px;top:848px;width:49px;height:35px;background:#f9f9f9;border-bottom:1px solid #eaeaea"></div>
<div class="a" style="left:677px;top:848px;width:146px;height:35px;background:#fff;border-bottom:1px solid #eaeaea"></div>
<div class="a" style="left:823px;top:848px;width:1039px;height:35px;background:#fec453;border-bottom:1px solid #eeb447"></div>
<div class="a" style="left:1862px;top:848px;width:48px;height:35px;background:#fff;border-bottom:1px solid #eaeaea"></div>
<div class="a" style="left:206px;top:883px;width:38px;height:34px;background:#e9e9e9;border-bottom:1px solid #d0d0d0"></div>
<div class="a" style="left:244px;top:883px;width:384px;height:34px;background:#fec453;border-bottom:1px solid #eeb447"></div>
<div class="a" style="left:628px;top:883px;width:49px;height:34px;background:#f9f9f9;border-bottom:1px solid #eaeaea"></div>
<div class="a" style="left:677px;top:883px;width:146px;height:34px;background:#fff;border-bottom:1px solid #eaeaea"></div>
<div class="a" style="left:823px;top:883px;width:1039px;height:34px;background:#fec453;border-bottom:1px solid #eeb447"></div>
<div class="a" style="left:1862px;top:883px;width:48px;height:34px;background:#fff;border-bottom:1px solid #eaeaea"></div>
<div class="a" style="left:436px;top:848px;width:0;height:69px;border-left:1px dotted #e3ad45"></div>
<div class="a" style="left:677px;top:848px;width:0;height:69px;border-left:1px dotted #d8d8d8"></div>
<div class="a" style="left:726px;top:848px;width:0;height:69px;border-left:1px dotted #d8d8d8"></div>
<div class="a" style="left:775px;top:848px;width:0;height:69px;border-left:1px dotted #d8d8d8"></div>
<div class="a" style="left:943px;top:848px;width:0;height:69px;border-left:1px dotted #e3ad45"></div>
<div class="a" style="left:1088px;top:848px;width:0;height:69px;border-left:1px dotted #e3ad45"></div>
<div class="a" style="left:1207px;top:848px;width:0;height:69px;border-left:1px dotted #e3ad45"></div>
<div class="a" style="left:1441px;top:848px;width:0;height:69px;border-left:1px dotted #e3ad45"></div>
<div class="a" style="left:1645px;top:848px;width:0;height:69px;border-left:1px dotted #e3ad45"></div>
<div class="t" style="left:251px;top:858.93px;font-size:14.2px;color:#0f78dc;text-decoration:underline;text-underline-offset:4px">Green, Brian</div>
<div class="t" style="left:443px;top:858.67px;font-size:14.5px;color:#111;">Father</div>
<div class="t" style="left:830px;top:859.10px;font-size:14px;color:#111;">789-788-9941</div>
<div class="t" style="left:950px;top:859.10px;font-size:14px;color:#111;">210-456-7450</div>
<div class="t" style="left:1095px;top:859.10px;font-size:14px;color:#111;">123-456-7890</div>
<div class="t" style="left:1214px;top:858.50px;font-size:14.7px;color:#111;">Boston General Hospital</div>
<div class="t" style="left:1448px;top:858.67px;font-size:14.5px;color:#0f78dc;text-decoration:underline;text-underline-offset:4px">BrianGreen123@demo.com</div>
<svg class="a" style="left:645.5px;top:859px" width="14" height="14" viewBox="0 0 14 14"><rect x="0.5" y="0.5" width="13" height="13" rx="2.5" fill="#111"/><path d="M3.3 7.2 L5.8 9.6 L10.7 4.4" fill="none" stroke="#fff" stroke-width="2.2"/></svg>
<svg class="a" style="left:694.5px;top:859px" width="14" height="14" viewBox="0 0 14 14"><rect x="0.5" y="0.5" width="13" height="13" rx="2.5" fill="#111"/><path d="M3.3 7.2 L5.8 9.6 L10.7 4.4" fill="none" stroke="#fff" stroke-width="2.2"/></svg>
<svg class="a" style="left:743.5px;top:859px" width="14" height="14" viewBox="0 0 14 14"><rect x="0.5" y="0.5" width="13" height="13" rx="2.5" fill="#111"/><path d="M3.3 7.2 L5.8 9.6 L10.7 4.4" fill="none" stroke="#fff" stroke-width="2.2"/></svg>
<svg class="a" style="left:792px;top:859px" width="14" height="14" viewBox="0 0 14 14"><rect x="0.5" y="0.5" width="13" height="13" rx="2.5" fill="#111"/><path d="M3.3 7.2 L5.8 9.6 L10.7 4.4" fill="none" stroke="#fff" stroke-width="2.2"/></svg>
<svg class="a" style="left:1876px;top:856px" width="21" height="17" viewBox="0 0 21 17"><path d="M10 3 H4 Q2 3 2 5 V13.5 Q2 15.5 4 15.5 H12.5 Q14.5 15.5 14.5 13.5 V9.5" fill="none" stroke="#0f78dc" stroke-width="2"/><path d="M8.5 10 L17.5 1.5" stroke="#0f78dc" stroke-width="2.2"/><path d="M12.5 0.5 H19.5 V7.5 Z" fill="#0f78dc"/></svg>
<div class="t" style="left:251px;top:893.93px;font-size:14.2px;color:#0f78dc;text-decoration:underline;text-underline-offset:4px">Green, Sarah</div>
<div class="t" style="left:443px;top:893.67px;font-size:14.5px;color:#111;">Mother</div>
<div class="t" style="left:830px;top:894.10px;font-size:14px;color:#111;">789-788-9941</div>
<div class="t" style="left:950px;top:894.10px;font-size:14px;color:#111;">781-486-5555</div>
<div class="t" style="left:1095px;top:894.10px;font-size:14px;color:#111;">123-456-7890</div>
<div class="t" style="left:1448px;top:893.67px;font-size:14.5px;color:#0f78dc;text-decoration:underline;text-underline-offset:4px">sarah.green@veracross.com</div>
<svg class="a" style="left:645.5px;top:894px" width="14" height="14" viewBox="0 0 14 14"><rect x="0.5" y="0.5" width="13" height="13" rx="2.5" fill="#111"/><path d="M3.3 7.2 L5.8 9.6 L10.7 4.4" fill="none" stroke="#fff" stroke-width="2.2"/></svg>
<svg class="a" style="left:694.5px;top:894px" width="14" height="14" viewBox="0 0 14 14"><rect x="0.5" y="0.5" width="13" height="13" rx="2.5" fill="#111"/><path d="M3.3 7.2 L5.8 9.6 L10.7 4.4" fill="none" stroke="#fff" stroke-width="2.2"/></svg>
<svg class="a" style="left:743.5px;top:894px" width="14" height="14" viewBox="0 0 14 14"><rect x="0.5" y="0.5" width="13" height="13" rx="2.5" fill="#111"/><path d="M3.3 7.2 L5.8 9.6 L10.7 4.4" fill="none" stroke="#fff" stroke-width="2.2"/></svg>
<svg class="a" style="left:792px;top:894px" width="14" height="14" viewBox="0 0 14 14"><rect x="0.5" y="0.5" width="13" height="13" rx="2.5" fill="#111"/><path d="M3.3 7.2 L5.8 9.6 L10.7 4.4" fill="none" stroke="#fff" stroke-width="2.2"/></svg>
<svg class="a" style="left:1876px;top:891px" width="21" height="17" viewBox="0 0 21 17"><path d="M10 3 H4 Q2 3 2 5 V13.5 Q2 15.5 4 15.5 H12.5 Q14.5 15.5 14.5 13.5 V9.5" fill="none" stroke="#0f78dc" stroke-width="2"/><path d="M8.5 10 L17.5 1.5" stroke="#0f78dc" stroke-width="2.2"/><path d="M12.5 0.5 H19.5 V7.5 Z" fill="#0f78dc"/></svg>
<div class="a" style="left:206px;top:51px;width:1px;height:866px;background:#d0d0d2"></div>
<div class="a" style="left:243px;top:848px;width:1px;height:69px;background:#cdcdcd"></div>
</body></html>
